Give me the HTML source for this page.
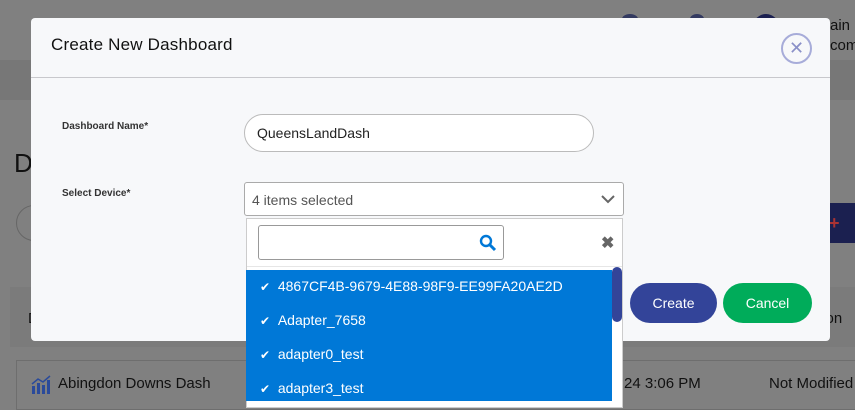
<!DOCTYPE html>
<html><head><style>
*{margin:0;padding:0;box-sizing:border-box}
body{width:855px;height:408px;overflow:hidden;background:#808080;font-family:"Liberation Sans",sans-serif;position:relative}
.a{position:absolute}
</style></head><body>
<div class="a" style="left:0;top:60px;width:855px;height:40px;background:#777"></div>
<div class="a" style="left:14px;top:148px;font-size:26px;color:#111">D</div>
<div class="a" style="left:16px;top:205px;width:40px;height:36px;border:1px solid #666;border-radius:18px"></div>
<div class="a" style="left:820px;top:203px;width:40px;height:40px;background:#1b2050"></div>
<div class="a" style="left:829px;top:213px;color:#a33;font-size:18px;font-weight:bold">+</div>
<div class="a" style="left:10px;top:287px;width:845px;height:60px;background:#7b7b7b"></div>
<div class="a" style="left:28px;top:310px;font-size:15px;color:#111">D</div>
<div class="a" style="left:818px;top:310px;font-size:15px;color:#111">tion</div>
<div class="a" style="left:16px;top:360px;width:845px;height:50px;border:1px solid #6e6e6e;background:#808080"></div>
<svg class="a" style="left:30px;top:374px" width="22" height="20"><g fill="#2a4a9a"><rect x="2" y="12" width="3" height="8"/><rect x="7" y="9" width="3" height="11"/><rect x="12" y="11" width="3" height="9"/><rect x="17" y="6" width="3" height="14"/></g><path d="M2 10 L8 5 L13 8 L20 2" stroke="#2a4a9a" fill="none" stroke-width="1.5"/></svg>
<div class="a" style="left:58px;top:375px;font-size:15px;color:#111">Abingdon Downs Dash</div>
<div class="a" style="left:624px;top:375px;font-size:15px;color:#111">24 3:06 PM</div>
<div class="a" style="left:769px;top:375px;font-size:15px;color:#111">Not Modified</div>
<div class="a" style="left:830px;top:16px;font-size:15px;color:#111;line-height:20px">ain<br>com</div>
<div class="a" style="left:753px;top:14px;width:26px;height:26px;border-radius:50%;background:#1b2050"></div>
<div class="a" style="left:622px;top:14px;width:16px;height:10px;border-radius:50%;background:#333a60"></div>
<div class="a" style="left:690px;top:14px;width:14px;height:10px;border-radius:50%;background:#333a60"></div>

<div class="a" style="left:31px;top:18px;width:799px;height:323px;background:#f7f8fa;border-radius:4px"></div>
<div class="a" style="left:31px;top:77px;width:799px;height:1px;background:#c8c8cc"></div>
<div class="a" style="left:51px;top:35px;font-size:17px;color:#111;letter-spacing:0.2px">Create New Dashboard</div>
<div class="a" style="left:781px;top:33px;width:31px;height:31px;border:2px solid #a7acd9;border-radius:50%;color:#8a90c8;font-size:18px;text-align:center;line-height:26px">✕</div>
<div class="a" style="left:62px;top:121px;font-size:10px;font-weight:bold;color:#333">Dashboard Name*</div>
<div class="a" style="left:62px;top:188px;font-size:10px;font-weight:bold;color:#333">Select Device*</div>
<div class="a" style="left:244px;top:114px;width:350px;height:38px;border:1px solid #bbb;border-radius:19px;background:#fff;padding:0 12px;line-height:36px;font-size:14px;color:#222">QueensLandDash</div>
<div class="a" style="left:244px;top:182px;width:380px;height:34px;border:1px solid #aaa;border-radius:3px;background:#fff;padding-left:7px;line-height:34px;font-size:14px;color:#555">4 items selected</div>
<svg class="a" style="left:600px;top:193px" width="16" height="12"><path d="M2 3 L8 9 L14 3" stroke="#666" stroke-width="2" fill="none"/></svg>
<div class="a" style="left:246px;top:218px;width:377px;height:190px;background:#fff;border:1px solid #ccc"></div>
<div class="a" style="left:258px;top:225px;width:246px;height:35px;border:1px solid #999;border-radius:3px;background:#fff"></div>
<svg class="a" style="left:479px;top:234px" width="18" height="18"><circle cx="7" cy="7" r="5" stroke="#0078d7" stroke-width="2.4" fill="none"/><path d="M11 11 L16 16" stroke="#0078d7" stroke-width="3"/></svg>
<div class="a" style="left:601px;top:233px;font-size:16px;font-weight:bold;color:#666">✖</div>
<div class="a" style="left:247px;top:266px;width:375px;height:1px;background:#e6e6e6"></div>
<div class="a" style="left:246px;top:270px;width:366px;height:131px;background:#0078d7"></div>
<div class="a" style="left:612px;top:267px;width:10px;height:55px;border-radius:5px;background:#334499"></div>
<div class="a" style="left:260px;top:270px;color:#fff;font-size:14px;line-height:33px">
<div><span style="font-size:12px">✔</span>&nbsp;&nbsp;4867CF4B-9679-4E88-98F9-EE99FA20AE2D</div>
<div><span style="font-size:12px">✔</span>&nbsp;&nbsp;Adapter_7658</div>
<div><span style="font-size:12px">✔</span>&nbsp;&nbsp;adapter0_test</div>
<div><span style="font-size:12px">✔</span>&nbsp;&nbsp;adapter3_test</div>
</div>
<div class="a" style="left:630px;top:283px;width:87px;height:40px;border-radius:20px;background:#334499;color:#fff;font-size:14px;text-align:center;line-height:40px">Create</div>
<div class="a" style="left:723px;top:283px;width:89px;height:40px;border-radius:20px;background:#00ac5a;color:#fff;font-size:14px;text-align:center;line-height:40px">Cancel</div>
</body></html>
